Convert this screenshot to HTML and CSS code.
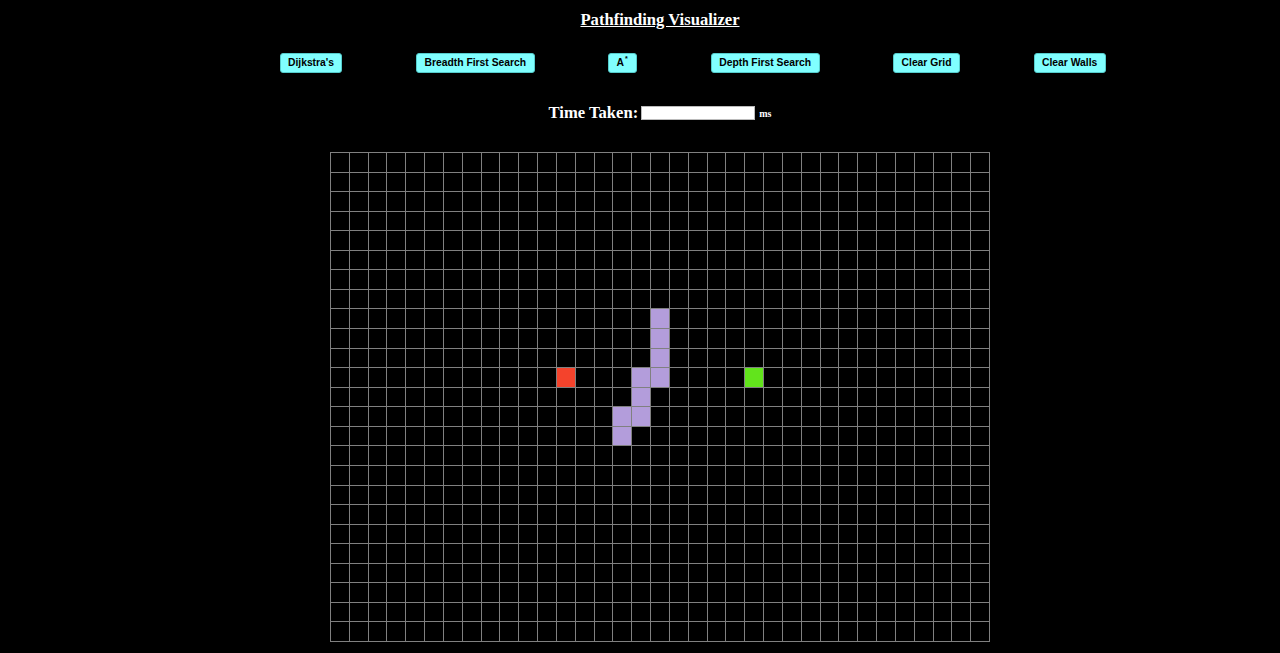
FILE: index.html
```html
<!DOCTYPE html>
<html lang="en">
<head>
<meta charset="utf-8">
<title>Pathfinding Visualizer</title>
<link rel="stylesheet" href="styles.css">
</head>
<body>
<div class="page">
  <h1 class="title">Pathfinding Visualizer</h1>
  <div class="controls">
    <button class="btn">Dijkstra's</button>
    <button class="btn">Breadth First Search</button>
    <button class="btn">A<sup class="star">*</sup></button>
    <button class="btn">Depth First Search</button>
    <button class="btn">Clear Grid</button>
    <button class="btn">Clear Walls</button>
  </div>
  <div class="timer">
    <span class="timer-label">Time Taken:</span>
    <input class="timer-input" type="text" readonly>
    <span class="timer-unit">ms</span>
  </div>
  <div class="grid" id="grid"></div>
</div>
<script src="script.js"></script>
</body>
</html>
```

FILE: styles.css
```css
html, body {
  margin: 0;
  padding: 0;
  background: #000;
}
body {
  height: 653px;
  overflow: hidden;
}
.page {
  padding-left: 40px;
  color: #fff;
  font-family: "Liberation Serif", "Times New Roman", serif;
}
.title {
  margin: 0;
  padding-top: 10px;
  font-size: 16.6px;
  line-height: 19px;
  font-weight: bold;
  text-align: center;
  text-decoration: underline;
}
.controls {
  display: flex;
  align-items: center;
  gap: 73.6px;
  margin-top: 24px;
  margin-left: 239.5px;
  height: 20px;
}
.btn {
  box-sizing: border-box;
  height: 20px;
  padding: 0 7.45px;
  border: 1px solid #55cccc;
  border-radius: 3px;
  background: #80ffff;
  color: #000;
  font-family: "Liberation Sans", Arial, sans-serif;
  font-weight: bold;
  font-size: 10.33px;
  line-height: 18px;
  white-space: nowrap;
}
.star {
  font-size: 7px;
  vertical-align: top;
  line-height: 10px;
  margin-left: 1px;
  margin-right: 1px;
}
.timer {
  display: flex;
  justify-content: center;
  align-items: center;
  margin-top: 30px;
  height: 20px;
}
.timer-label {
  font-size: 16.6px;
  font-weight: bold;
}
.timer-input {
  box-sizing: border-box;
  width: 114px;
  height: 14px;
  margin: 0 0 0 3px;
  padding: 0;
  border: 1px solid #bbb;
  background: #fff;
}
.timer-unit {
  margin-left: 4px;
  font-size: 10px;
  font-weight: bold;
}
.grid {
  box-sizing: border-box;
  display: grid;
  grid-template-columns: repeat(35, 1fr);
  grid-template-rows: repeat(25, 1fr);
  gap: 1px;
  padding: 1px;
  width: 660px;
  height: 490px;
  margin: 29px auto 0;
  background: #808080;
}
.cell {
  background: #000;
}
.cell.start {
  background: #f4432c;
}
.cell.end {
  background: #62e41c;
}
.cell.path {
  background: #b39ddb;
}
```

FILE: script.js
```js
(function () {
  var grid = document.getElementById('grid');
  var special = {
    '11,12': 'start',
    '11,22': 'end',
    '8,17': 'path', '9,17': 'path', '10,17': 'path', '11,17': 'path',
    '11,16': 'path', '12,16': 'path', '13,16': 'path',
    '13,15': 'path', '14,15': 'path'
  };
  var frag = document.createDocumentFragment();
  for (var r = 0; r < 25; r++) {
    for (var c = 0; c < 35; c++) {
      var d = document.createElement('div');
      d.className = 'cell' + (special[r + ',' + c] ? ' ' + special[r + ',' + c] : '');
      frag.appendChild(d);
    }
  }
  grid.appendChild(frag);
})();
```
